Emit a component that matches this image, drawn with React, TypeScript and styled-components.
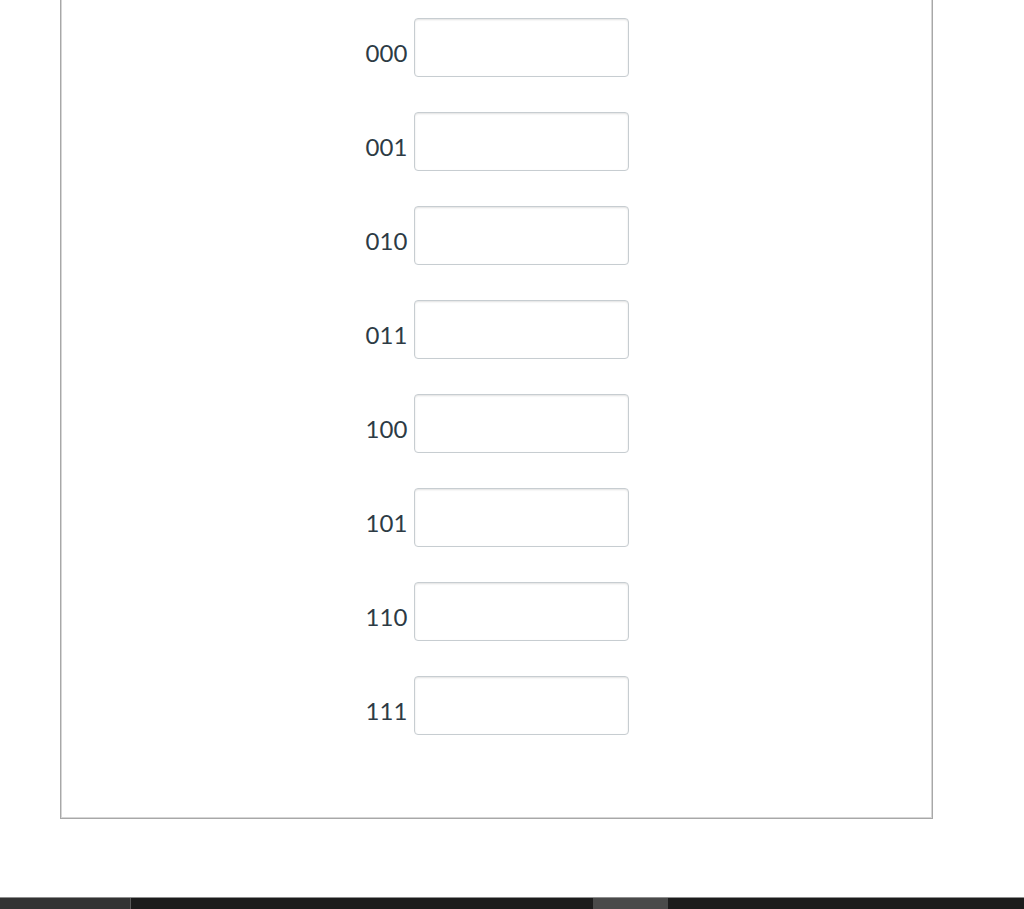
import React from 'react';
import styled, { createGlobalStyle } from 'styled-components';

const GlobalStyle = createGlobalStyle`
    html, body {
        margin: 0;
        padding: 0;
        background: #fff;
        overflow: hidden;
    }
    body {
        font-family: Lato, "Open Sans", Arial, sans-serif;
        color: #2d3b45;
    }
`

const Page = styled.div`
    width: 1024px;
    height: 909px;
    display: flex;
    flex-direction: column;
`

const Panel = styled.div`
    margin-left: 60px;
    width: 871px;
    border: 1px solid #a8a8a8;
    border-top: none;
    box-shadow: inset 1px 0 0 #d6d6d6, inset 0 -1px 0 #d6d6d6, inset -1px 0 0 #d6d6d6;
    padding: 18px 0 83px;
`

const Table = styled.div`
    display: grid;
    grid-template-columns: auto 215px;
    justify-content: center;
    column-gap: 7px;
    row-gap: 35px;
    padding-left: 2px;
`

const Label = styled.label`
    justify-self: end;
    align-self: center;
    font-size: 24px;
    line-height: 24px;
    padding-top: 10px;
`

const Field = styled.input`
    box-sizing: border-box;
    width: 215px;
    height: 59px;
    margin: 0;
    border: 1px solid #c7cdd1;
    border-radius: 4px;
    background: #fff;
    box-shadow: inset 0 1px 2px rgba(0, 0, 0, 0.12);
    outline: none;
`

const Spacer = styled.div`
    flex: 1;
`

const Taskbar = styled.div`
    display: flex;
    height: 11px;
    border-top: 1px solid #8e8e8e;
    background: #1c1c1c;
`

const Segment = styled.div<{ $w?: number; $bg: string }>`
    width: ${p => (p.$w ? `${p.$w}px` : 'auto')};
    flex: ${p => (p.$w ? 'none' : '1')};
    background: ${p => p.$bg};
`

const codes = ['000', '001', '010', '011', '100', '101', '110', '111'];

const App: React.FC = () => {
    return (
        <Page>
            <GlobalStyle />
            <Panel>
                <Table>
                    {codes.map(c => (
                        <React.Fragment key={c}>
                            <Label htmlFor={`code-${c}`}>{c}</Label>
                            <Field id={`code-${c}`} type="text" />
                        </React.Fragment>
                    ))}
                </Table>
            </Panel>
            <Spacer />
            <Taskbar>
                <Segment $w={130} $bg="#333333" />
                <Segment $w={1} $bg="#5a5a5a" />
                <Segment $w={462} $bg="#1c1c1c" />
                <Segment $w={75} $bg="#4a4a4a" />
                <Segment $bg="#1c1c1c" />
            </Taskbar>
        </Page>
    )
};

export default App;
